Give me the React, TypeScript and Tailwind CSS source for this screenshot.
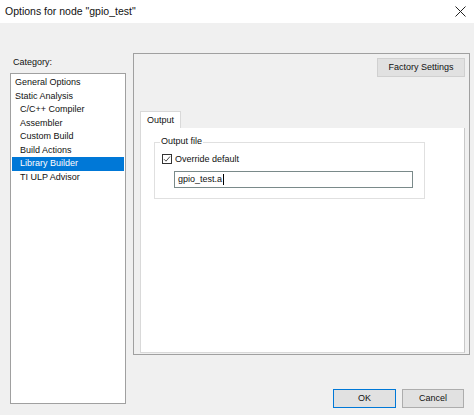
const items = [
  { label: 'General Options', indent: false },
  { label: 'Static Analysis', indent: false },
  { label: 'C/C++ Compiler', indent: true },
  { label: 'Assembler', indent: true },
  { label: 'Custom Build', indent: true },
  { label: 'Build Actions', indent: true },
  { label: 'Library Builder', indent: true, selected: true },
  { label: 'TI ULP Advisor', indent: true },
];

export default function App() {
  return (
    <div className="w-[474px] h-[415px] bg-[#f0f0f0] flex flex-col font-['Liberation_Sans',Arial,sans-serif] text-[9px] text-[#111] overflow-hidden">
      {/* Title bar */}
      <div className="h-[23px] bg-white flex items-center justify-between pl-[5px] pr-[8px] shrink-0">
        <span className="text-[10.5px] leading-none">Options for node "gpio_test"</span>
        <svg width="11" height="11" viewBox="0 0 11 11" className="text-[#222]">
          <path d="M0.5 0.5 L10.5 10.5 M10.5 0.5 L0.5 10.5" stroke="currentColor" strokeWidth="1" />
        </svg>
      </div>

      <div className="flex flex-row flex-1">
        {/* Left column */}
        <div className="ml-[10px] w-[116px] flex flex-col">
          <div className="mt-[33px] h-[17px] pl-[3px] leading-[13px]">Category:</div>
          <div className="h-[331px] bg-white border border-[#a0a0a0] pt-[2px] px-[1px]">
            {items.map((it) => (
              <div
                key={it.label}
                className={
                  'h-[13.5px] leading-[13.5px] whitespace-nowrap ' +
                  (it.indent ? 'pl-[8px] ' : 'pl-[3px] ') +
                  (it.selected ? 'bg-[#0078d7] text-white' : '')
                }
              >
                {it.label}
              </div>
            ))}
          </div>
        </div>

        {/* Right column */}
        <div className="ml-[7px] w-[337px] flex flex-col">
          <div className="mt-[30px] h-[302px] border border-[#a0a0a0] bg-[#f0f0f0] flex flex-col">
            <div className="flex justify-end pt-[4px] pr-[4px]">
              <button className="w-[88px] h-[19px] bg-[#e1e1e1] border border-[#d0d0d0] text-[9px] leading-none">
                Factory Settings
              </button>
            </div>
            <div className="mt-[34px] ml-[6px] mr-[4px] flex flex-col flex-1 mb-[1px]">
              <div className="flex">
                <div className="h-[17px] px-[6px] bg-white border border-b-0 border-[#d9d9d9] leading-[16px]">
                  Output
                </div>
              </div>
              <div className="flex-1 bg-white border border-t-0 border-[#d9d9d9] border-r-[#c8c8c8] pt-[14px] pl-[13px]">
                <div className="relative w-[271px] h-[57px] border border-[#e0e0e0]">
                  <span className="absolute left-[5px] top-[-8px] bg-white px-[1px] leading-[13px]">Output file</span>
                  <div className="flex items-center mt-[10px] ml-[7px] gap-[3px]">
                    <div className="w-[10px] h-[10px] border border-[#333] bg-white flex items-center justify-center">
                      <svg width="8" height="8" viewBox="0 0 8 8">
                        <path d="M1 4.2 L3 6.2 L7 1.5" stroke="#333" strokeWidth="0.9" fill="none" />
                      </svg>
                    </div>
                    <span className="leading-[12px]">Override default</span>
                  </div>
                  <div className="mt-[6px] ml-[19px] w-[239px] h-[17px] border border-[#7a8a8a] bg-white flex items-center pl-[3px]">
                    <span>gpio_test.a</span>
                    <span className="w-[1px] h-[11px] bg-black ml-[1px]" />
                  </div>
                </div>
              </div>
            </div>
          </div>
          <div className="mt-[34px] flex justify-end gap-[6px] pr-[6px]">
            <button className="w-[63px] h-[19px] bg-[#e1e1e1] border border-[#0078d7] leading-none">OK</button>
            <button className="w-[62px] h-[19px] bg-[#e1e1e1] border border-[#adadad] leading-none">Cancel</button>
          </div>
        </div>
      </div>
    </div>
  );
}
